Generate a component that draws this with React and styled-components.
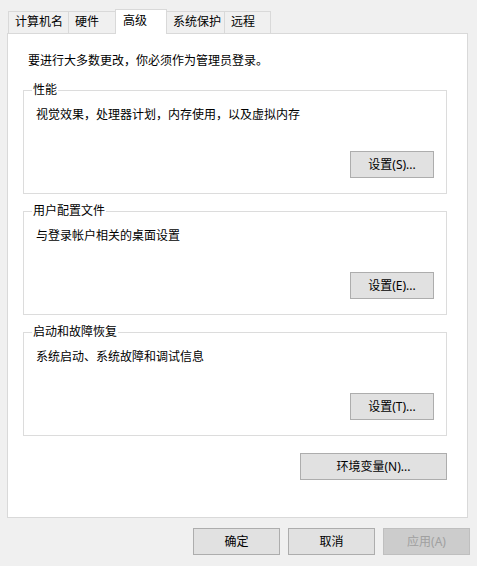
import React from "react";
import styled, { createGlobalStyle } from "styled-components";

const GlobalStyle = createGlobalStyle`
  html, body {
    margin: 0;
    padding: 0;
    background: #f0f0f0;
  }
  body {
    font-family: "Noto Sans", "Noto Sans CJK SC", sans-serif;
    font-size: 12px;
    color: #000000;
  }
`;

const Dialog = styled.div({
  width: "477px",
  height: "566px",
  boxSizing: "border-box",
  padding: "9px 9px 0 7px",
  background: "#f0f0f0",
});

const TabStrip = styled.div({
  display: "flex",
  alignItems: "flex-start",
  height: "24px",
  paddingLeft: "1px",
});

const Tab = styled.div(({ selected, width }) => ({
  position: "relative",
  zIndex: selected ? 2 : 1,
  boxSizing: "border-box",
  width: `${width}px`,
  height: selected ? "25px" : "22px",
  marginTop: selected ? 0 : "2px",
  marginLeft: "-1px",
  paddingLeft: selected ? "7px" : "6px",
  border: "1px solid #d9d9d9",
  borderBottom: "none",
  background: selected ? "#ffffff" : "#f0f0f0",
  lineHeight: selected ? "22px" : "20px",
  whiteSpace: "nowrap",
  "&:first-child": {
    marginLeft: 0,
  },
}));

const Panel = styled.div({
  boxSizing: "border-box",
  height: "485px",
  padding: "19px 20px 0 15px",
  background: "#ffffff",
  border: "1px solid #d9d9d9",
});

const Intro = styled.p({
  margin: "0 0 13px 5px",
  lineHeight: "16px",
});

const Group = styled.fieldset({
  margin: "0 0 9px 0",
  padding: "9px 12px 15px",
  border: "1px solid #dcdcdc",
  minInlineSize: 0,
  display: "flex",
  flexDirection: "column",
});

const Legend = styled.legend({
  marginLeft: "-4px",
  padding: "0 1px",
  lineHeight: "16px",
});

const Description = styled.div({
  lineHeight: "16px",
});

const ButtonRow = styled.div(({ top }) => ({
  display: "flex",
  justifyContent: "flex-end",
  marginTop: `${top}px`,
}));

const Button = styled.button(({ width, disabled }) => ({
  boxSizing: "border-box",
  width: `${width}px`,
  height: "27px",
  padding: 0,
  margin: 0,
  fontFamily: "inherit",
  fontSize: "12px",
  lineHeight: "25px",
  color: disabled ? "#a0a0a0" : "#000000",
  background: disabled ? "#cccccc" : "#e1e1e1",
  border: `1px solid ${disabled ? "#bfbfbf" : "#adadad"}`,
  borderRadius: 0,
  textAlign: "center",
}));

const Footer = styled.div({
  display: "flex",
  justifyContent: "flex-end",
  gap: "8px",
  margin: "10px -2px 0 0",
});

const tabs = [
  { label: "计算机名", width: 61 },
  { label: "硬件", width: 48 },
  { label: "高级", width: 52, selected: true },
  { label: "系统保护", width: 59 },
  { label: "远程", width: 47 },
];

const groups = [
  { title: "性能", text: "视觉效果，处理器计划，内存使用，以及虚拟内存", button: "设置(S)..." },
  { title: "用户配置文件", text: "与登录帐户相关的桌面设置", button: "设置(E)..." },
  { title: "启动和故障恢复", text: "系统启动、系统故障和调试信息", button: "设置(T)..." },
];

const App = () => (
  <>
    <GlobalStyle />
    <Dialog>
      <TabStrip>
        {tabs.map((tab) => (
          <Tab key={tab.label} width={tab.width} selected={tab.selected}>
            {tab.label}
          </Tab>
        ))}
      </TabStrip>
      <Panel>
        <Intro>要进行大多数更改，你必须作为管理员登录。</Intro>
        {groups.map((group) => (
          <Group key={group.title}>
            <Legend>{group.title}</Legend>
            <Description>{group.text}</Description>
            <ButtonRow top={28}>
              <Button width={84}>{group.button}</Button>
            </ButtonRow>
          </Group>
        ))}
        <ButtonRow top={17}>
          <Button width={147}>环境变量(N)...</Button>
        </ButtonRow>
      </Panel>
      <Footer>
        <Button width={87}>确定</Button>
        <Button width={87}>取消</Button>
        <Button width={87} disabled>
          应用(A)
        </Button>
      </Footer>
    </Dialog>
  </>
);

export default App;
